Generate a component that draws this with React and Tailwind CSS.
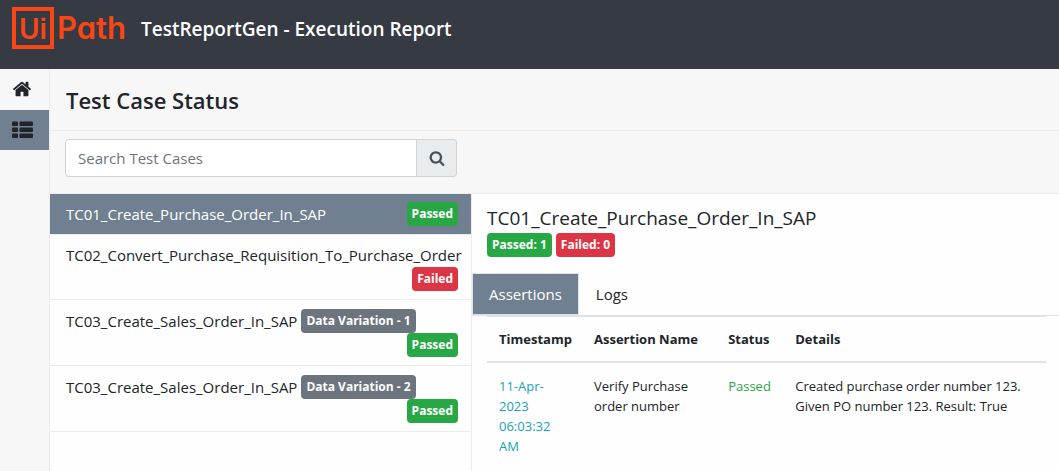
import { useState } from "react";

const testCases = [
    { id: 1, name: "TC01_Create_Purchase_Order_In_SAP", status: "Passed" },
    { id: 2, name: "TC02_Convert_Purchase_Requisition_To_Purchase_Order", status: "Failed" },
    { id: 3, name: "TC03_Create_Sales_Order_In_SAP", variation: "Data Variation - 1", status: "Passed" },
    { id: 4, name: "TC03_Create_Sales_Order_In_SAP", variation: "Data Variation - 2", status: "Passed" },
];

const assertions = [
    {
        timestamp: "11-Apr-2023 06:03:32 AM",
        name: "Verify Purchase order number",
        status: "Passed",
        details: "Created purchase order number 123. Given PO number 123. Result: True",
    },
];

const badgeColors = {
    green: "bg-[#28a745]",
    red: "bg-[#dc3545]",
    gray: "bg-[#6c757d]",
};

const Badge = ({ color, children }) => (
    <span className={"inline-block h-6 rounded px-[5px] text-[12px] leading-6 font-bold whitespace-nowrap text-white " + badgeColors[color]}>
        {children}
    </span>
);

const Logo = () => (
    <svg width="118" height="44" viewBox="0 0 118 44" role="img" aria-label="UiPath" className="shrink-0 [font-feature-settings:'cv11','ss07']">
        <rect x="3" y="3" width="38" height="38" fill="none" stroke="#fa4616" strokeWidth="4" />
        <g fill="#fa4616" fontFamily="Inter, sans-serif" fontWeight="600">
            <text x="8" y="33" fontSize="28">Ui</text>
            <text x="46" y="33" fontSize="31">Path</text>
        </g>
    </svg>
);

const HomeIcon = () => (
    <svg width="20" height="20" viewBox="0 0 1792 1792" fill="currentColor" aria-hidden="true">
        <path d="M1472 992v480q0 26-19 45t-45 19h-384v-384h-256v384h-384q-26 0-45-19t-19-45v-480q0-1 .5-3t.5-3l575-474 575 474q1 2 1 6zm223-69l-62 74q-8 9-21 11h-3q-13 0-21-7l-692-577-692 577q-12 8-24 7-13-2-21-11l-62-74q-8-10-7-23.500t11-21.500l719-599q32-26 76-26t76 26l244 204v-195q0-14 9-23t23-9h192q14 0 23 9t9 23v408l219 182q10 8 11 21.500t-7 23.500z" />
    </svg>
);

const ListIcon = () => (
    <svg width="21" height="21" viewBox="0 0 1792 1792" fill="currentColor" aria-hidden="true">
        {[128, 640, 1152].map((y) => (
            <g key={y}>
                <rect x="0" y={y} width="512" height="384" rx="96" />
                <rect x="640" y={y} width="1152" height="384" rx="96" />
            </g>
        ))}
    </svg>
);

const SearchIcon = () => (
    <svg width="16" height="16" viewBox="0 0 1792 1792" fill="currentColor" aria-hidden="true">
        <path d="M1216 832q0-185-131.500-316.500t-316.500-131.500-316.500 131.500-131.500 316.500 131.500 316.500 316.500 131.500 316.500-131.500 131.500-316.500zm512 832q0 52-38 90t-90 38q-54 0-90-38l-343-342q-179 124-399 124-143 0-273.500-55.500t-225-150-150-225-55.500-273.500 55.500-273.500 150-225 225-150 273.500-55.500 273.500 55.500 225 150 150 225 55.500 273.500q0 220-124 399l343 343q37 37 37 90z" />
    </svg>
);

export default function App() {
    const [selectedId, setSelectedId] = useState(1);
    const [tab, setTab] = useState("assertions");
    const [search, setSearch] = useState("");

    const selected = testCases.find((t) => t.id === selectedId);
    const visibleCases = testCases.filter((t) => t.name.toLowerCase().includes(search.toLowerCase()));

    return (
        <div className="flex min-h-screen flex-col bg-[#f7f7f7] font-['Open_Sans','Noto_Sans',sans-serif] text-[15px] leading-6 text-[#212529]">
            <header className="flex h-[69px] items-start gap-3 bg-[#363a42] px-[11px] pt-[6px]">
                <Logo />
                <h1 className="pt-[9px] text-[19px] leading-7 font-semibold text-white">TestReportGen - Execution Report</h1>
            </header>
            <div className="flex grow">
                <nav className="w-[50px] shrink-0 border-r border-[#ececec]">
                    <a href="#home" aria-label="Home" className="flex h-10 items-center pl-3">
                        <HomeIcon />
                    </a>
                    <a href="#tests" aria-label="Test cases" className="mt-px flex h-10 items-center bg-[#708090] pl-3">
                        <ListIcon />
                    </a>
                </nav>
                <main className="flex min-w-0 grow flex-col">
                    <h2 className="border-b border-[#ececec] px-4 pt-[17px] pb-[15px] text-[22px] leading-[29px] font-semibold">Test Case Status</h2>
                    <div className="grid grid-cols-[minmax(0,422fr)_minmax(0,587fr)] border-b border-[#ececec]">
                        <div className="flex px-[15px] pt-2 pb-4">
                            <input
                                type="text"
                                aria-label="Search Test Cases"
                                value={search}
                                onChange={(ev) => setSearch(ev.target.value)}
                                placeholder="Search Test Cases"
                                className="h-[38px] min-w-0 grow rounded-l border border-[#ced4da] bg-white px-3 placeholder:text-[#6c757d]"
                            />
                            <button type="button" aria-label="Search" className="flex w-10 items-center justify-center rounded-r border border-l-0 border-[#ced4da] bg-[#e9ecef] text-[#495057]">
                                <SearchIcon />
                            </button>
                        </div>
                    </div>
                    <div className="grid grow grid-cols-[minmax(0,422fr)_minmax(0,587fr)] bg-[#fefefe]">
                        <ul className="border-r border-[#ececec]">
                            {visibleCases.map((t) => (
                                <li key={t.id}>
                                    <button
                                        type="button"
                                        onClick={() => setSelectedId(t.id)}
                                        className={"flex w-full flex-wrap items-center gap-x-1 border-b border-[#ececec] pr-[13px] pb-2 pl-4 text-left " + (t.variation ? "pt-[9px] " : "pt-2 ") + (t.id === selectedId ? "bg-[#708090] text-white" : "")}>
                                        <span className="min-w-0">{t.name}</span>
                                        {t.variation && <Badge color="gray">{t.variation}</Badge>}
                                        <span className="ml-auto flex">
                                            <Badge color={t.status === "Passed" ? "green" : "red"}>{t.status}</Badge>
                                        </span>
                                    </button>
                                </li>
                            ))}
                        </ul>
                        <section className="min-w-0">
                            <div className="px-[15px] pt-3">
                                <h3 className="text-[19px] leading-6">{selected.name}</h3>
                                <div className="mt-[3px] flex gap-1">
                                    <Badge color="green">Passed: 1</Badge>
                                    <Badge color="red">Failed: 0</Badge>
                                </div>
                            </div>
                            <div role="tablist" className="mt-4 flex border-b border-[#dee2e6]">
                                <button
                                    type="button"
                                    role="tab"
                                    aria-selected={tab === "assertions"}
                                    onClick={() => setTab("assertions")}
                                    className={"h-[42px] border px-4 " + (tab === "assertions" ? "border-[#dee2e6] bg-[#708090] text-white" : "border-transparent")}>
                                    Assertions
                                </button>
                                <button
                                    type="button"
                                    role="tab"
                                    aria-selected={tab === "logs"}
                                    onClick={() => setTab("logs")}
                                    className={"h-[42px] border px-4 " + (tab === "logs" ? "border-[#dee2e6] bg-[#708090] text-white" : "border-transparent")}>
                                    Logs
                                </button>
                            </div>
                            {tab === "assertions" && (
                                <div className="-mt-px pr-[13px] pl-[15px]">
                                    <table className="w-full table-fixed text-left text-[13px] leading-5">
                                        <colgroup>
                                            <col className="w-[17%]" />
                                            <col className="w-[24%]" />
                                            <col className="w-[12%]" />
                                            <col />
                                        </colgroup>
                                        <thead className="border-y-2 border-[#dee2e6]">
                                            <tr className="h-[46px] align-middle font-bold">
                                                <th className="px-3">Timestamp</th>
                                                <th className="px-3">Assertion Name</th>
                                                <th className="px-3">Status</th>
                                                <th className="px-3">Details</th>
                                            </tr>
                                        </thead>
                                        <tbody>
                                            {assertions.map((a) => (
                                                <tr key={a.timestamp} className="align-top">
                                                    <td className="px-3 pt-[13px] text-[#17a2b8]">{a.timestamp}</td>
                                                    <td className="px-3 pt-[13px]">{a.name}</td>
                                                    <td className="px-3 pt-[13px] text-[#28a745]">{a.status}</td>
                                                    <td className="px-3 pt-[13px]">{a.details}</td>
                                                </tr>
                                            ))}
                                        </tbody>
                                    </table>
                                </div>
                            )}
                        </section>
                    </div>
                </main>
            </div>
        </div>
    );
}
